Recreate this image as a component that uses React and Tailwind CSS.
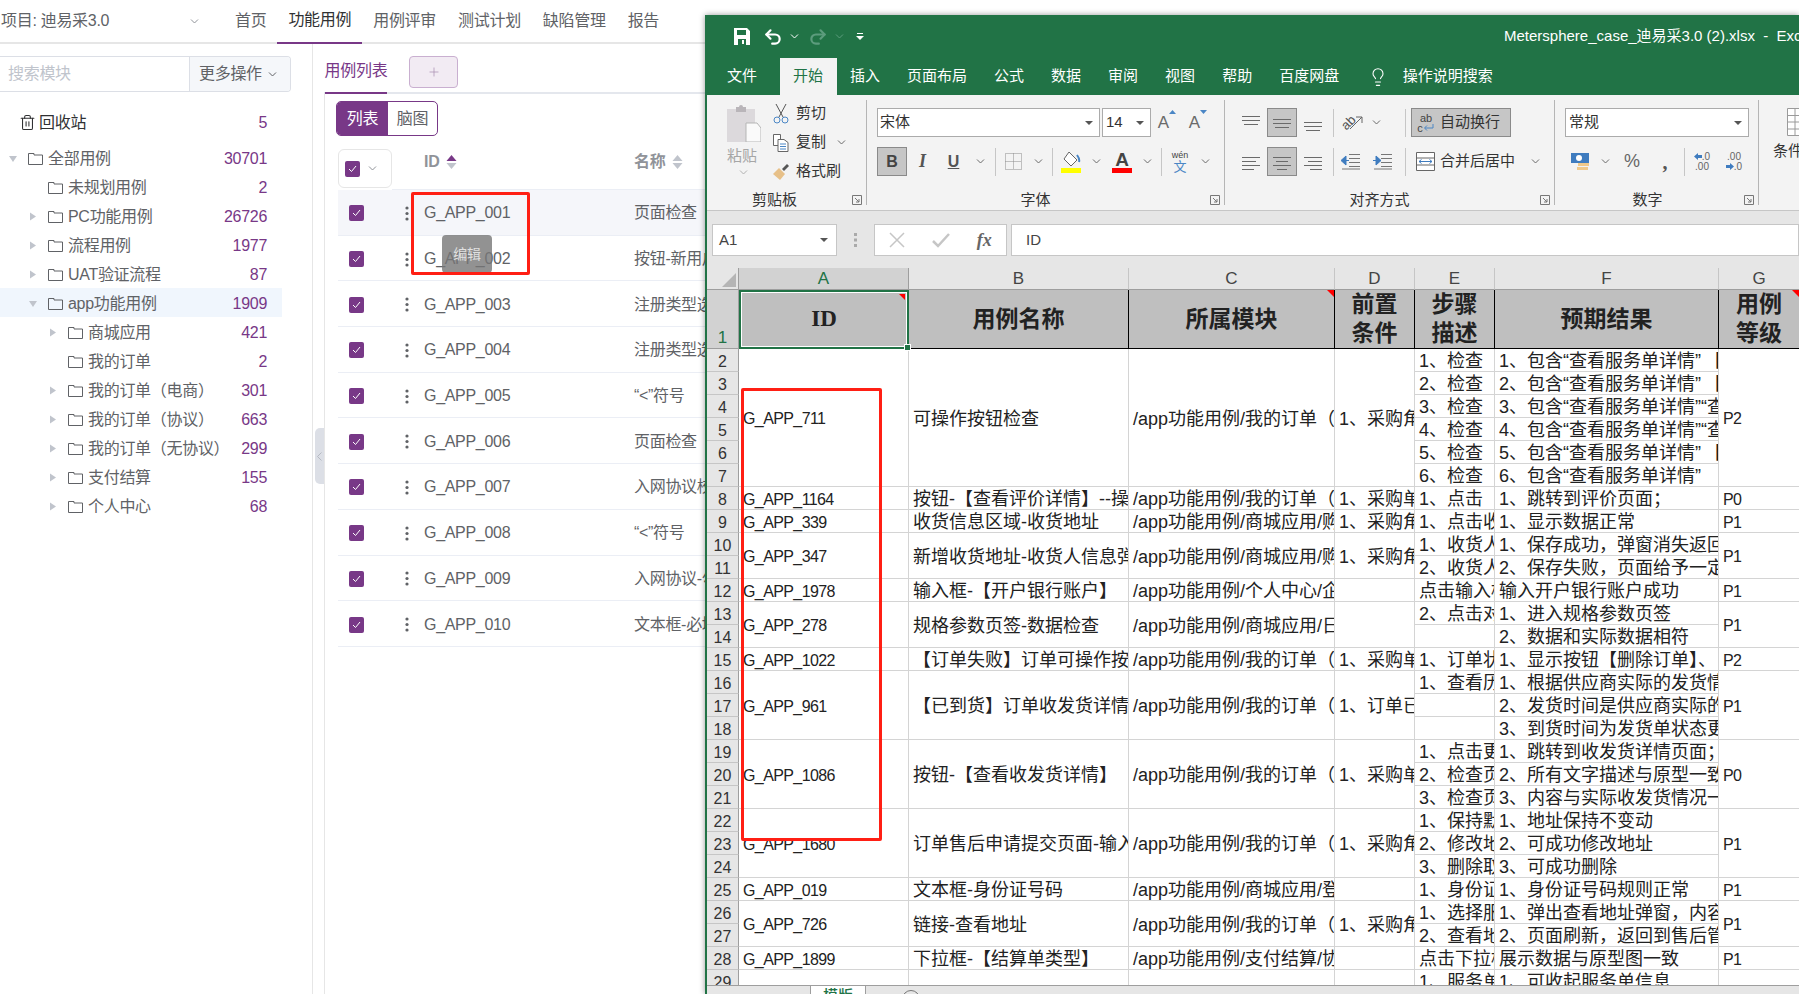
import { Trash2, Lightbulb, Undo2, Redo2, Plus } from 'lucide-react';

const tree = [
  { level: 0, arrow: 'down', label: '全部用例', count: 30701 },
  { level: 1, label: '未规划用例', count: 2 },
  { level: 1, arrow: 'right', label: 'PC功能用例', count: 26726 },
  { level: 1, arrow: 'right', label: '流程用例', count: 1977 },
  { level: 1, arrow: 'right', label: 'UAT验证流程', count: 87 },
  { level: 1, arrow: 'down', label: 'app功能用例', count: 1909, active: true },
  { level: 2, arrow: 'right', label: '商城应用', count: 421 },
  { level: 2, label: '我的订单', count: 2 },
  { level: 2, arrow: 'right', label: '我的订单（电商）', count: 301 },
  { level: 2, arrow: 'right', label: '我的订单（协议）', count: 663 },
  { level: 2, arrow: 'right', label: '我的订单（无协议）', count: 299 },
  { level: 2, arrow: 'right', label: '支付结算', count: 155 },
  { level: 2, arrow: 'right', label: '个人中心', count: 68 },
];

const cases = [
  ['G_APP_001', '页面检查'],
  ['G_APP_002', '按钮-新用户注册'],
  ['G_APP_003', '注册类型选择'],
  ['G_APP_004', '注册类型选择'],
  ['G_APP_005', '“<”符号'],
  ['G_APP_006', '页面检查'],
  ['G_APP_007', '入网协议校验'],
  ['G_APP_008', '“<”符号'],
  ['G_APP_009', '入网协议-勾选'],
  ['G_APP_010', '文本框-必填'],
];

const MY = '/app功能用例/我的订单（';
const BUY = '/app功能用例/商城应用/购物车';

const sheet = [
  {
    span: 6, id: 'G_APP_711', name: '可操作按钮检查', module: MY, pre: '1、采购角', level: 'P2',
    steps: ['1、检查 【', '2、检查 【', '3、检查 【', '4、检查 【', '5、检查 【', '6、检查 【'],
    results: ['1、包含“查看服务单详情”\u2009【', '2、包含“查看服务单详情”\u2009【', '3、包含“查看服务单详情”“查看', '4、包含“查看服务单详情”“查看', '5、包含“查看服务单详情”\u2009【', '6、包含“查看服务单详情”'],
  },
  { span: 1, id: 'G_APP_1164', name: '按钮-【查看评价详情】--操作', module: MY, pre: '1、采购单', level: 'P0', steps: ['1、点击 【'], results: ['1、跳转到评价页面；'] },
  { span: 1, id: 'G_APP_339', name: '收货信息区域-收货地址', module: BUY, pre: '1、采购角', level: 'P1', steps: ['1、点击收货'], results: ['1、显示数据正常'] },
  { span: 2, id: 'G_APP_347', name: '新增收货地址-收货人信息弹窗', module: BUY, pre: '1、采购角', level: 'P1', steps: ['1、收货人信息', '2、收货人信息'], results: ['1、保存成功，弹窗消失返回列表', '2、保存失败，页面给予一定提示'] },
  { span: 1, id: 'G_APP_1978', name: '输入框-【开户银行账户】', module: '/app功能用例/个人中心/企业', pre: '', level: 'P1', steps: ['点击输入框'], results: ['输入开户银行账户成功'] },
  { span: 2, id: 'G_APP_278', name: '规格参数页签-数据检查', module: '/app功能用例/商城应用/日', pre: '', level: 'P1', steps: ['2、点击对比', ''], results: ['1、进入规格参数页签', '2、数据和实际数据相符'] },
  { span: 1, id: 'G_APP_1022', name: '【订单失败】订单可操作按钮', module: MY, pre: '1、采购单', level: 'P2', steps: ['1、订单状态'], results: ['1、显示按钮【删除订单】、【再次'] },
  { span: 3, id: 'G_APP_961', name: '【已到货】订单收发货详情', module: MY, pre: '1、订单已到货', level: 'P1', steps: ['1、查看历史', '', ''], results: ['1、根据供应商实际的发货情况', '2、发货时间是供应商实际的发货', '3、到货时间为发货单状态更新'] },
  { span: 3, id: 'G_APP_1086', name: '按钮-【查看收发货详情】', module: MY, pre: '1、采购单', level: 'P0', steps: ['1、点击更多', '2、检查页面', '3、检查页面'], results: ['1、跳转到收发货详情页面；', '2、所有文字描述与原型一致', '3、内容与实际收发货情况一致'] },
  { span: 3, id: 'G_APP_1680', name: '订单售后申请提交页面-输入', module: MY, pre: '1、采购角', level: 'P1', steps: ['1、保持默认', '2、修改地址', '3、删除取消'], results: ['1、地址保持不变动', '2、可成功修改地址', '3、可成功删除'] },
  { span: 1, id: 'G_APP_019', name: '文本框-身份证号码', module: '/app功能用例/商城应用/登录', pre: '', level: 'P1', steps: ['1、身份证号'], results: ['1、身份证号码规则正常'] },
  { span: 2, id: 'G_APP_726', name: '链接-查看地址', module: MY, pre: '1、采购角', level: 'P1', steps: ['1、选择服务', '2、查看地址'], results: ['1、弹出查看地址弹窗，内容正确', '2、页面刷新，返回到售后管理页'] },
  { span: 1, id: 'G_APP_1899', name: '下拉框-【结算单类型】', module: '/app功能用例/支付结算/协议', pre: '', level: 'P1', steps: ['点击下拉框'], results: ['展示数据与原型图一致'] },
  { span: 1, id: '', name: '', module: '', pre: '', level: '', steps: ['1、服务单'], results: ['1、可收起服务单信息'] },
];

const Chev = ({ color = '#6a6a6a' }) => (
  <svg width="9" height="5" viewBox="0 0 9 5" fill="none" stroke={color}><path d="M1 .5l3.500 3.500L8 .5" /></svg>
);

const Caret = () => (
  <svg width="8" height="4" viewBox="0 0 8 4" fill="#555"><path d="M0 0h8L4 4z" /></svg>
);

const Folder = () => (
  <svg width="15" height="14" viewBox="0 0 15 14" fill="none" stroke="#606266" className="shrink-0">
    <path d="M.5 1.500h5.500v1.500h8.500v9.500H.5z" />
  </svg>
);

const TreeArrow = ({ dir }) => (
  <svg width="8" height="9" viewBox="0 0 8 9" fill="#c0c4cc">
    {dir === 'down' ? <path d="M0 2h8L4 8z" /> : dir === 'right' ? <path d="M1 .5l6 4-6 4z" /> : null}
  </svg>
);

const Check = ({ className }) => (
  <span className={`flex items-center justify-center rounded-[2px] bg-[#783887] ${className}`}>
    <svg width="9" height="8" viewBox="0 0 9 8" fill="none" stroke="#fff"><path d="M1 4l2.500 2.500L8 1" /></svg>
  </span>
);

const Sort = ({ up = '#c0c4cc' }) => (
  <svg width="11" height="16" viewBox="0 0 11 16" className="ml-[7px]">
    <path d="M5.500 1l5 6H.5z" fill={up} />
    <path d="M.5 9h10l-5 6z" fill="#c0c4cc" />
  </svg>
);

const TreeRow = ({ node }) => {
  const pad = { 0: 'pl-[9px]', 1: 'pl-[29px]', 2: 'pl-[49px]' }[node.level];
  return (
    <div className={`flex h-[29px] w-[282px] items-center pr-[15px] pt-[2px] ${pad} ${node.active ? 'bg-[#f0f6fd]' : ''}`}>
      <span className="flex w-[19px] shrink-0"><TreeArrow dir={node.arrow} /></span>
      <Folder />
      <span className="ml-[5px] whitespace-nowrap">{node.label}</span>
      <span className="ml-auto text-[#783887]">{node.count}</span>
    </div>
  );
};

const Sidebar = () => (
  <aside className="w-[313px] shrink-0 border-r border-[#e6e6e6] pt-[12px]">
    <div className="flex h-[36px] w-[291px] overflow-hidden rounded-r-[4px] border border-l-0 border-[#dcdfe6]">
      <div className="flex w-[190px] items-center border-r border-[#dcdfe6] pl-[8px] text-[#c0c4cc]">搜索模块</div>
      <div className="flex flex-1 items-center gap-[6px] bg-[#f5f7fa] pl-[9px]">更多操作 <Chev color="#606266" /></div>
    </div>
    <div className="mt-[15px] flex h-[29px] w-[282px] items-center pl-[19px] pr-[15px] pt-[2px] text-[#303133]">
      <Trash2 size={17} strokeWidth={1.5} />
      <span className="ml-[3px]">回收站</span>
      <span className="ml-auto text-[#783887]">5</span>
    </div>
    <div className="mt-[7px]">
      {tree.map((node) => <TreeRow key={node.label} node={node} />)}
    </div>
  </aside>
);

const CaseTable = () => (
  <div>
    <div className="ml-[2px] flex h-[41px]">
      <div className="flex h-[39px] w-[54px] shrink-0 items-center gap-[8px] rounded-[6px] border border-[#e6e6e6] pl-[6px]">
        <Check className="h-[16px] w-[15px]" />
        <Chev color="#909399" />
      </div>
      <div className="flex flex-1 items-start border-b border-[#ebeef5] pl-[32px] pt-[1px] font-bold text-[#909399]">
        <span className="flex w-[210px] items-center">ID<Sort up="#783887" /></span>
        <span className="flex items-center">名称<Sort /></span>
      </div>
    </div>
    {cases.map(([id, name], i) => (
      <div key={id} className={`ml-[2px] flex h-[45.7px] items-center whitespace-nowrap border-b border-[#ebeef5] pl-[11px] pt-[2px] ${i === 0 ? 'bg-[#f5f6fa]' : ''}`}>
        <Check className="h-[16px] w-[15px] shrink-0" />
        <svg width="4" height="15" viewBox="0 0 4 15" fill="#606266" className="ml-[41px] shrink-0">
          <circle cx="2" cy="2" r="1.600" /><circle cx="2" cy="7.500" r="1.600" /><circle cx="2" cy="13" r="1.600" />
        </svg>
        <span className="ml-[15px] w-[210px] shrink-0">{id}</span>
        <span>{name}</span>
      </div>
    ))}
  </div>
);

const WebApp = () => (
  <div className="flex h-full flex-col">
    <header className="flex h-[44px] shrink-0 border-b-2 border-[#e6e6e6]">
      <div className="flex w-[224px] items-center pl-[1px]">
        <span>项目: 迪易采3.0</span>
        <span className="ml-[81px]"><Chev color="#909399" /></span>
      </div>
      {['首页', '功能用例', '用例评审', '测试计划', '缺陷管理', '报告'].map((item) => (
        <div key={item} className={`flex h-[44px] items-center px-[11px] pb-[2px] ${item === '功能用例' ? 'border-b-2 border-[#783887] text-[#303133]' : ''}`}>{item}</div>
      ))}
    </header>
    <div className="flex min-h-0 flex-1">
      <Sidebar />
      <main className="flex min-w-0 flex-1 flex-col pl-[11px]">
        <div className="flex h-[50px] shrink-0 items-start border-b-2 border-[#e4e7ed] pl-px">
          <div className="flex h-[50px] w-[62px] items-center justify-center whitespace-nowrap border-b-2 border-[#783887] pt-[6px] text-[#783887]">用例列表</div>
          <div className="ml-[22px] mt-[12px] flex h-[32px] w-[49px] items-center justify-center rounded-[4px] border border-[#c9afd0] bg-[#f2ebf3] text-[#a88bb0]"><Plus size={14} strokeWidth={1.2} /></div>
        </div>
        <div className="flex-1 border-l border-[#e6e6e6] pl-[11px] pt-[7px]">
          <div className="flex h-[35px] w-[102px] overflow-hidden rounded-[5px] border border-[#783887]">
            <div className="flex w-[51px] items-center justify-center bg-[#783887] text-white">列表</div>
            <div className="flex flex-1 items-center justify-center">脑图</div>
          </div>
          <div className="mt-[13px]"><CaseTable /></div>
        </div>
      </main>
    </div>
  </div>
);

/* ---------- excel ---------- */

const Lines = ({ rows }) => (
  <svg width="22" height="18" viewBox="0 0 22 18" stroke="#6a6a6a">
    {rows.map(([y, x1, x2]) => <path key={y} d={`M${x1} ${y}.5H${x2}`} />)}
  </svg>
);

const Sep = ({ className = '' }) => <span className={`h-[28px] w-px shrink-0 bg-[#c6c6c6] ${className}`} />;

const Launcher = () => (
  <svg width="10" height="10" viewBox="0 0 10 10" fill="none" stroke="#777" className="absolute right-[4px] top-[3px]">
    <path d="M.5 9.500V.5h9v9zM3 3l4 4M7 4v3H4" />
  </svg>
);

const Group = ({ label, width, labelPad, children }) => (
  <section className={`my-[5px] flex shrink-0 flex-col border-r border-[#b5b5b5] pt-[8px] ${width}`}>
    <div className="flex-1">{children}</div>
    <div className={`relative -mb-[3px] h-[16px] text-center leading-[16px] ${labelPad}`}>{label}<Launcher /></div>
  </section>
);

const Clipboard = () => (
  <Group label="剪贴板" width="w-[160px]" labelPad="pr-[24px]">
    <div className="flex pl-[20px]">
      <div className="flex w-[46px] flex-col items-start">
        <svg width="34" height="38" viewBox="0 0 34 38" className="mt-[-4px]">
          <path d="M0 5h28v33H0z" fill="#dcd9dc" />
          <path d="M9 3h3a2 2 0 014 0h3v5H9z" fill="#b9b5b9" />
          <path d="M19 19h11l4 5v14H19z" fill="#fafafa" stroke="#b5b5b5" />
        </svg>
        <span className="mt-[3px] text-[#a6a6a6]">粘贴</span>
        <span className="ml-[12px] mt-[2px]"><Chev color="#b0b0b0" /></span>
      </div>
      <div className="mt-[-9px] flex flex-col">
        <div className="flex h-[29px] items-center gap-[7px]">
          <svg width="16" height="20" viewBox="0 0 16 20" fill="none" stroke="#555"><path d="M3 0l7 13M13 0L6 13" /><circle cx="4" cy="16" r="3" stroke="#4a86c5" /><circle cx="12" cy="16" r="3" stroke="#4a86c5" /></svg>
          剪切
        </div>
        <div className="flex h-[29px] items-center gap-[7px]">
          <svg width="16" height="18" viewBox="0 0 16 18" fill="#fff" stroke="#666"><path d="M.5.500h7v11h-7z" /><path d="M5 5.500h6l4 3v9H5z" /><path d="M7 10h6M7 12.500h6M7 15h6" stroke="#4a86c5" /></svg>
          复制
          <span className="ml-[4px]"><Chev /></span>
        </div>
        <div className="flex h-[29px] items-center gap-[7px]">
          <svg width="16" height="16" viewBox="0 0 16 16"><path d="M0 10l6-6 6 6-5 6z" fill="#e7c088" /><path d="M9 5l5-5 2 2-5 5z" fill="#555" /></svg>
          格式刷
        </div>
      </div>
    </div>
  </Group>
);

const Font = () => (
  <Group label="字体" width="w-[358px]" labelPad="pr-[20px]">
    <div className="pl-[10px]">
      <div className="flex h-[29px] items-center">
        <div className="flex h-full w-[223px] items-center justify-between border border-[#ababab] bg-white pl-[2px] pr-[6px]">宋体<Caret /></div>
        <div className="ml-[2px] flex h-full w-[49px] items-center justify-between border border-[#ababab] bg-white pl-[3px] pr-[6px]">14<Caret /></div>
        <div className="flex w-[32px] justify-center text-[17px] text-[#6a6a6a]">A<svg width="7" height="4" viewBox="0 0 7 4" fill="#4a86c5"><path d="M0 4l3.500-4L7 4z" /></svg></div>
        <div className="flex w-[30px] justify-center text-[17px] text-[#6a6a6a]">A<svg width="7" height="4" viewBox="0 0 7 4" fill="#4a86c5"><path d="M0 0h7L3.500 4z" /></svg></div>
      </div>
      <div className="mt-[10px] flex h-[29px] items-center">
        <div className="flex h-full w-[30px] items-center justify-center border border-[#8a8a8a] bg-[#c6c6c6] text-[16px] font-bold text-[#444]">B</div>
        <div className="w-[31px] text-center font-['Liberation_Serif'] text-[18px] font-bold italic text-[#555]">I</div>
        <div className="w-[31px] text-center text-[16px] font-bold text-[#555] underline">U</div>
        <div className="flex w-[22px] justify-center"><Chev /></div>
        <Sep className="ml-[4px]" />
        <div className="flex w-[34px] justify-center">
          <svg width="17" height="17" viewBox="0 0 17 17" fill="none" stroke="#8a8a8a" strokeDasharray="1 1"><path d="M.5.500h16v16H.5zM8.500.5v16M.5 8.500h16" /></svg>
        </div>
        <div className="flex w-[16px] justify-center"><Chev /></div>
        <Sep className="ml-[6px]" />
        <div className="flex w-[36px] flex-col items-center">
          <svg width="20" height="17" viewBox="0 0 20 17" fill="#fff" stroke="#666"><path d="M8 1l8 8-6 6-7-7z" /><path d="M16 4q3 4 2 7" stroke="#4a86c5" strokeWidth="2" fill="none" /></svg>
          <span className="h-[5px] w-[20px] bg-[#ffff00]" />
        </div>
        <div className="flex w-[14px] justify-center"><Chev /></div>
        <div className="flex w-[38px] flex-col items-center">
          <span className="h-[17px] text-[19px] font-semibold leading-[17px] text-[#444]">A</span>
          <span className="h-[5px] w-[20px] bg-[#ff0000]" />
        </div>
        <div className="flex w-[12px] justify-center"><Chev /></div>
        <Sep className="ml-[8px]" />
        <div className="flex w-[36px] flex-col items-center leading-none">
          <span className="text-[9px] text-[#444]">wén</span>
          <span className="text-[13px] text-[#4a86c5]">文</span>
        </div>
        <div className="flex w-[14px] justify-center"><Chev /></div>
      </div>
    </div>
  </Group>
);

const Align = () => (
  <Group label="对齐方式" width="w-[330px]" labelPad="pr-[20px]">
    <div className="pl-[10px]">
      <div className="flex h-[29px] items-center">
        <div className="flex w-[32px] justify-center"><Lines rows={[[2, 2, 20], [6, 2, 20], [10, 4, 18]]} /></div>
        <div className="flex h-full w-[30px] items-center justify-center border border-[#8a8a8a] bg-[#c6c6c6]"><Lines rows={[[5, 2, 20], [9, 2, 20], [13, 4, 18]]} /></div>
        <div className="flex w-[32px] justify-center"><Lines rows={[[8, 2, 20], [12, 2, 20], [16, 4, 18]]} /></div>
        <Sep className="ml-[4px]" />
        <div className="flex w-[36px] items-center justify-center">
          <span className="-rotate-45 text-[13px] leading-none text-[#555]">ab</span>
          <svg width="14" height="14" viewBox="0 0 14 14" fill="none" stroke="#666" className="-ml-[6px]"><path d="M1 13L13 1M7 1h6v6" /></svg>
        </div>
        <div className="flex w-[12px] justify-center"><Chev /></div>
        <Sep className="ml-[23px]" />
        <div className="ml-[5px] flex h-full w-[100px] items-center whitespace-nowrap border border-[#8a8a8a] bg-[#c6c6c6]">
          <span className="flex w-[28px] flex-col items-center text-[11px] leading-[10px] text-[#444]">
            <span>ab</span>
            <span className="flex items-center">c<svg width="12" height="8" viewBox="0 0 12 8" fill="none" stroke="#4a86c5"><path d="M10 0v4H2M4 1.500L1.500 4 4 6.500" /></svg></span>
          </span>
          自动换行
        </div>
      </div>
      <div className="mt-[10px] flex h-[29px] items-center">
        <div className="flex w-[32px] justify-center"><Lines rows={[[4, 2, 20], [8, 2, 16], [12, 2, 20], [16, 2, 14]]} /></div>
        <div className="flex h-full w-[30px] items-center justify-center border border-[#8a8a8a] bg-[#c6c6c6]"><Lines rows={[[4, 2, 20], [8, 5, 17], [12, 2, 20], [16, 6, 16]]} /></div>
        <div className="flex w-[32px] justify-center"><Lines rows={[[4, 2, 20], [8, 6, 20], [12, 2, 20], [16, 8, 20]]} /></div>
        <Sep className="ml-[4px]" />
        <div className="flex w-[32px] justify-center">
          <svg width="19" height="17" viewBox="0 0 19 17" fill="none" stroke="#777"><path d="M8 1.500h11M8 5.500h11M8 9.500h11M8 13.500h11M1 16h18" /><path d="M0 7.500L5 3v9zM4 7.500h4" fill="#3f7cbf" stroke="#3f7cbf" /></svg>
        </div>
        <div className="flex w-[32px] justify-center">
          <svg width="19" height="17" viewBox="0 0 19 17" fill="none" stroke="#777"><path d="M8 1.500h11M8 5.500h11M8 9.500h11M8 13.500h11M1 16h18" /><path d="M8 7.500L3 3v9zM0 7.500h4" fill="#3f7cbf" stroke="#3f7cbf" /></svg>
        </div>
        <Sep className="ml-[7px]" />
        <div className="ml-[5px] flex items-center whitespace-nowrap">
          <span className="flex w-[29px] justify-center">
            <svg width="19" height="19" viewBox="0 0 19 19" fill="#fff" stroke="#666"><path d="M.5.500h18v18H.5zM.5 6h18M.5 13h18" /><path d="M3 9.500h13M5.500 7.500l-2.500 2 2.500 2M13.500 7.500l2.500 2-2.500 2" stroke="#3f7cbf" fill="none" /></svg>
          </span>
          合并后居中
          <span className="ml-[16px]"><Chev /></span>
        </div>
      </div>
    </div>
  </Group>
);

const NumberGroup = () => (
  <Group label="数字" width="w-[204px]" labelPad="pr-[18px]">
    <div className="pl-[10px]">
      <div className="flex h-[29px] w-[184px] items-center justify-between border border-[#ababab] bg-white pl-[3px] pr-[6px]">常规<Caret /></div>
      <div className="mt-[10px] flex h-[29px] items-center">
        <div className="flex w-[30px] justify-center">
          <svg width="19" height="20" viewBox="0 0 19 20"><path d="M0 1h18v10H0z" fill="#3f7cbf" /><circle cx="8" cy="6" r="3" fill="#fff" /><path d="M7 11h11v3H7zM6 15h11v3H6z" fill="#f0c98a" /></svg>
        </div>
        <div className="flex w-[20px] justify-center"><Chev /></div>
        <div className="w-[34px] text-center text-[18px] text-[#666]">%</div>
        <div className="w-[32px] text-center font-['Liberation_Serif'] text-[20px] font-bold leading-[20px] text-[#555]">,</div>
        <Sep className="ml-[3px]" />
        <div className="flex w-[34px] flex-col items-center text-[10px] leading-[10px] text-[#666]">
          <span className="flex items-center"><svg width="8" height="7" viewBox="0 0 8 7" fill="#3f7cbf"><path d="M0 3.500L4 0v2h4v3H4v2z" /></svg>.0</span>
          <span>.00</span>
        </div>
        <div className="flex w-[30px] flex-col items-center text-[10px] leading-[10px] text-[#666]">
          <span>.00</span>
          <span className="flex items-center"><svg width="8" height="7" viewBox="0 0 8 7" fill="#3f7cbf"><path d="M8 3.500L4 0v2H0v3h4v2z" /></svg>.0</span>
        </div>
      </div>
    </div>
  </Group>
);

const Ribbon = () => (
  <div className="flex h-[116px] shrink-0 overflow-hidden border-b border-[#c6c6c6] bg-[#f3f3f3] text-[15px] text-[#333]">
    <Clipboard />
    <Font />
    <Align />
    <NumberGroup />
    <div className="pl-[14px] pt-[13px]">
      <svg width="24" height="28" viewBox="0 0 24 28" fill="#fff" stroke="#9a9a9a" className="ml-[14px]"><path d="M.5.500h24v27H.5zM.5 7.500h24M.5 14h24M.5 21h24M8 .5v27" /></svg>
      <div className="mt-[4px] whitespace-nowrap">条件格式</div>
    </div>
  </div>
);

const TitleBar = () => (
  <div className="h-[80px] shrink-0 bg-[#217346] text-white">
    <div className="flex h-[43px] items-center">
      <div className="flex w-[797px] shrink-0 items-center pl-[27px]">
        <svg width="16" height="17" viewBox="0 0 16 17" fill="#fff"><path fillRule="evenodd" d="M0 0h13l3 3v14H0zM3 2v5h9V2zM4 11v6h8v-6z" /><path d="M8 12h2v4H8z" /></svg>
        <Undo2 size={20} strokeWidth={2.6} className="ml-[13px]" />
        <span className="ml-[7px]"><Chev color="#fff" /></span>
        <Redo2 size={20} strokeWidth={2.6} color="#5c9c7d" className="ml-[9px]" />
        <span className="ml-[7px]"><Chev color="#5c9c7d" /></span>
        <svg width="8" height="8" viewBox="0 0 8 8" fill="#fff" className="ml-[12px]"><path d="M1 0h6v1H1zM0 3h8L4 7z" /></svg>
      </div>
      <span className="whitespace-nowrap text-[15px]">Metersphere_case_迪易采3.0 (2).xlsx&nbsp; - &nbsp;Excel</span>
    </div>
    <div className="flex h-[37px] items-stretch whitespace-nowrap text-[15px]">
      <span className="ml-[20px] mr-[22.500px] flex items-center">文件</span>
      <span className="flex items-center bg-[#f3f3f3] px-[13.500px] text-[#217346]">开始</span>
      {['插入', '页面布局', '公式', '数据', '审阅', '视图', '帮助', '百度网盘'].map((tab) => (
        <span key={tab} className="flex items-center px-[13.500px]">{tab}</span>
      ))}
      <span className="ml-[15px] flex items-center"><Lightbulb size={20} strokeWidth={1.3} /></span>
      <span className="ml-[15px] flex items-center">操作说明搜索</span>
    </div>
  </div>
);

const FormulaBar = () => (
  <div className="flex h-[57px] shrink-0 items-start bg-[#e6e6e6] pl-[5px] pt-[13px] text-[15px] text-[#444]">
    <div className="flex h-[32px] w-[125px] items-center justify-between border border-[#c6c6c6] bg-white pl-[6px] pr-[8px]">A1<Caret /></div>
    <svg width="3" height="14" viewBox="0 0 3 14" fill="#aaa" className="ml-[17px] mt-[9px]"><path d="M0 0h3v3H0zM0 5.500h3v3H0zM0 11h3v3H0z" /></svg>
    <div className="ml-[17px] flex h-[32px] w-[133px] items-center border border-[#c6c6c6] bg-white">
      <span className="flex w-[44px] justify-center"><svg width="16" height="16" viewBox="0 0 16 16" stroke="#c6c6c6" strokeWidth="1.500"><path d="M1 1l14 14M15 1L1 15" /></svg></span>
      <span className="flex w-[44px] justify-center"><svg width="18" height="15" viewBox="0 0 18 15" fill="none" stroke="#c6c6c6" strokeWidth="2.500"><path d="M1 8l5 5L17 1" /></svg></span>
      <span className="w-[44px] text-center font-['Liberation_Serif'] text-[18px] font-bold italic text-[#666]">fx</span>
    </div>
    <div className="ml-[4px] flex h-[32px] flex-1 items-center border border-[#c6c6c6] bg-white pl-[14px]">ID</div>
  </div>
);

const Comment = ({ size = 'w-[7px] h-[7px]', className = 'right-0 top-0' }) => (
  <svg viewBox="0 0 7 7" fill="#ff0000" className={`absolute ${size} ${className}`}><path d="M0 0h7v7z" /></svg>
);

const cellBase = 'flex items-center overflow-hidden whitespace-nowrap border-b border-r border-[#d4d4d4] px-[4px] pt-[3px]';
const latin = 'text-[16px] tracking-[-0.6px]';

const HeadCell = ({ col, children, comment }) => (
  <div style={{ gridColumn: col, gridRow: 2 }} className="relative flex items-center justify-center border-b border-r border-black bg-[#bfbfbf] text-center font-['Liberation_Serif','Noto_Sans_CJK_SC',serif] text-[23px] font-bold leading-[29px] text-[#222]">
    <span>{children}</span>
    {comment && <Comment />}
  </div>
);

const Sheet = () => {
  let row = 3;
  const rowCount = sheet.reduce((sum, g) => sum + g.span, 0);
  return (
    <div className="grid min-h-0 flex-1 grid-cols-[32px_170px_220px_206px_80px_80px_224px_81px] grid-rows-[22px_59px] auto-rows-[23px] overflow-hidden text-[18px] text-[#222]">
      <div className="flex items-end justify-end border-b border-r border-[#9e9e9e] bg-[#e6e6e6] p-[2px]">
        <svg width="14" height="14" viewBox="0 0 14 14" fill="#b5b5b5"><path d="M14 0v14H0z" /></svg>
      </div>
      {['A', 'B', 'C', 'D', 'E', 'F', 'G'].map((c) => (
        <div key={c} className={`flex items-center justify-center border-b border-r border-[#9e9e9e] text-[17px] ${c === 'A' ? 'bg-[#d2d2d2] text-[#217346]' : 'border-r-[#c6c6c6] bg-[#e6e6e6] text-[#444]'}`}>{c}</div>
      ))}
      <div style={{ gridColumn: 1, gridRow: 2 }} className="flex items-end justify-center border-b border-r border-[#9e9e9e] bg-[#d2d2d2] text-[17px] leading-[20px] text-[#217346]">1</div>
      <div style={{ gridColumn: 2, gridRow: 2 }} className="relative z-10 flex items-center justify-center border-2 border-[#217346] bg-[#bfbfbf] font-['Liberation_Serif'] text-[23px] font-bold text-[#222] shadow-[inset_0_0_0_1px_#fff]">
        ID
        <Comment size="w-[6px] h-[6px]" className="right-[2px] top-[2px]" />
        <span className="absolute -bottom-[4px] -right-[4px] h-[7px] w-[7px] border border-white bg-[#217346]" />
      </div>
      <HeadCell col={3}>用例名称</HeadCell>
      <HeadCell col={4} comment>所属模块</HeadCell>
      <HeadCell col={5}>前置<br />条件</HeadCell>
      <HeadCell col={6}>步骤<br />描述</HeadCell>
      <HeadCell col={7}>预期结果</HeadCell>
      <HeadCell col={8} comment>用例<br />等级</HeadCell>
      {Array.from({ length: rowCount }, (_, i) => (
        <div key={i} style={{ gridColumn: 1, gridRow: i + 3 }} className="flex items-center justify-center border-b border-r border-[#9e9e9e] border-b-[#c6c6c6] bg-[#e6e6e6] pt-[3px] text-[16px] text-[#333]">{i + 2}</div>
      ))}
      {sheet.flatMap((g) => {
        const start = row;
        row += g.span;
        const area = (col) => ({ gridColumn: col, gridRow: `${start} / span ${g.span}` });
        return [
          <div key={`${start}a`} style={area(2)} className={`${cellBase} ${latin}`}>{g.id}</div>,
          <div key={`${start}b`} style={area(3)} className={cellBase}>{g.name}</div>,
          <div key={`${start}c`} style={area(4)} className={cellBase}>{g.module}</div>,
          <div key={`${start}d`} style={area(5)} className={cellBase}>{g.pre}</div>,
          ...g.steps.map((s, i) => <div key={`${start}e${i}`} style={{ gridColumn: 6, gridRow: start + i }} className={cellBase}>{s}</div>),
          ...g.results.map((s, i) => <div key={`${start}f${i}`} style={{ gridColumn: 7, gridRow: start + i }} className={cellBase}>{s}</div>),
          <div key={`${start}g`} style={area(8)} className={`${cellBase} ${latin}`}>{g.level}</div>,
        ];
      })}
    </div>
  );
};

const SheetTabs = () => (
  <div className="flex h-[9px] shrink-0 border-t border-[#9e9e9e] bg-[#e6e6e6] text-[15px]">
    <div className="ml-[103px] h-[24px] w-[56px] shrink-0 border-x border-[#9e9e9e] bg-white pt-[1px] text-center font-medium leading-[18px] text-[#217346]">模版</div>
    <div className="ml-[36px] mt-[4px] h-[18px] w-[18px] rounded-full border border-[#777]" />
  </div>
);

const ExcelWindow = () => (
  <div className="absolute bottom-0 left-[705px] right-0 top-[15px] flex flex-col overflow-hidden border-l-2 border-[#217346] bg-white tracking-normal shadow-[0_0_6px_rgba(0,0,0,0.4)]">
    <TitleBar />
    <Ribbon />
    <FormulaBar />
    <Sheet />
    <SheetTabs />
  </div>
);

const App = () => (
  <div className="relative h-[994px] w-[1799px] overflow-hidden bg-white text-[16px] tracking-[-0.3px] text-[#606266] [font-family:'Liberation_Sans','Noto_Sans_CJK_SC',sans-serif]">
    <WebApp />
    {/* grey handle that collapses the module tree */}
    <div className="absolute left-[315px] top-[428px] flex h-[56px] w-[9px] items-center justify-center rounded-l-[5px] bg-[#dcdfe6]">
      <svg width="5" height="9" viewBox="0 0 5 9" fill="none" stroke="#b5b9c2"><path d="M4.500.5l-4 4 4 4" /></svg>
    </div>
    {/* tooltip and the red marks drawn on the screenshot */}
    <div className="absolute left-[442px] top-[235px] flex h-[38px] w-[50px] items-center justify-center rounded-[4px] bg-[#777777]/80 text-[14px] text-[#e0e0e0]">编辑</div>
    <div className="absolute left-[411px] top-[192px] h-[83px] w-[119px] rounded-[2px] border-[3px] border-[#ff1f14]" />
    <ExcelWindow />
    <div className="absolute left-[741px] top-[388px] h-[453px] w-[141px] rounded-[2px] border-[3px] border-[#ff1f14]" />
  </div>
);

export default App;
